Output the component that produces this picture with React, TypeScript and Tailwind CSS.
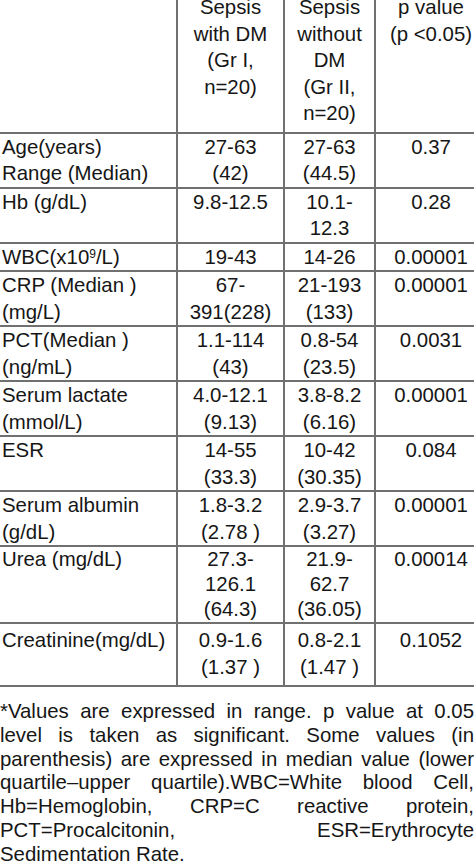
import React from "react";

type Row = { label: React.ReactNode; a: React.ReactNode; b: React.ReactNode; p: string; cls?: string };

const rows: Row[] = [
  { label: <>Age(years)<br />Range (Median)</>, a: <>27-63<br />(42)</>, b: <>27-63<br />(44.5)</>, p: "0.37" },
  { label: <>Hb (g/dL)</>, a: <>9.8-12.5</>, b: <>10.1-<br />12.3</>, p: "0.28" },
  { label: <>WBC(x10<sup className="text-[12px]">9</sup>/L)</>, a: <>19-43</>, b: <>14-26</>, p: "0.00001" },
  { label: <>CRP (Median )<br />(mg/L)</>, a: <>67-<br />391(228)</>, b: <>21-193<br />(133)</>, p: "0.00001" },
  { label: <>PCT(Median )<br />(ng/mL)</>, a: <>1.1-114<br />(43)</>, b: <>0.8-54<br />(23.5)</>, p: "0.0031" },
  { label: <>Serum lactate<br />(mmol/L)</>, a: <>4.0-12.1<br />(9.13)</>, b: <>3.8-8.2<br />(6.16)</>, p: "0.00001" },
  { label: <>ESR</>, a: <>14-55<br />(33.3)</>, b: <>10-42<br />(30.35)</>, p: "0.084" },
  { label: <>Serum albumin<br />(g/dL)</>, a: <>1.8-3.2<br />(2.78 )</>, b: <>2.9-3.7<br />(3.27)</>, p: "0.00001" },
  { label: <>Urea (mg/dL)</>, a: <>27.3-<br />126.1<br />(64.3)</>, b: <>21.9-<br />62.7<br />(36.05)</>, p: "0.00014", cls: "leading-[25px]" },
  { label: <>Creatinine(mg/dL)</>, a: <>0.9-1.6<br />(1.37 )</>, b: <>0.8-2.1<br />(1.47 )</>, p: "0.1052", cls: "pt-[3px] pb-[5px]" },
];

const lines = [
  "*Values are expressed in range. p value at 0.05",
  "level is taken as significant. Some values (in",
  "parenthesis) are expressed in median value (lower",
  "quartile\u2013upper quartile).WBC=White blood Cell,",
  "Hb=Hemoglobin, CRP=C reactive protein,",
  "PCT=Procalcitonin, ESR=Erythrocyte",
];

export default function App() {
  const bd = "border-[#707070]";
  return (
    <div className="w-[474px] h-[865px] overflow-hidden bg-white text-[#161616] font-['Liberation_Sans',Arial,sans-serif]">
      <div className="w-[474px] overflow-hidden -mt-[6px]">
        <table className="table-fixed border-collapse w-[486px] text-[20.4px] leading-[26.5px]">
          <colgroup>
            <col className="w-[177px]" />
            <col className="w-[107px]" />
            <col className="w-[91px]" />
            <col className="w-[111px]" />
          </colgroup>
          <tbody>
            <tr className={`border-b-2 ${bd}`}>
              <td className="p-0 pb-[5px] align-top" />
              <td className={`p-0 pb-[5px] align-top text-center border-l-2 ${bd}`}>
                Sepsis<br />with DM<br />(Gr I,<br />n=20)
              </td>
              <td className={`p-0 pb-[5px] align-top text-center border-l-2 ${bd}`}>
                Sepsis<br />without<br />DM<br />(Gr II,<br />n=20)
              </td>
              <td className={`p-0 pb-[5px] align-top text-center border-l-2 ${bd}`}>
                p value<br />(p &lt;0.05)
              </td>
            </tr>
            {rows.map((r, i) => (
              <tr key={i} className={`border-b-2 ${bd}`}>
                <td className={`p-0 pl-[2px] align-top text-left whitespace-nowrap ${r.cls ?? ""}`}>{r.label}</td>
                <td className={`p-0 align-top text-center border-l-2 ${bd} ${r.cls ?? ""}`}>{r.a}</td>
                <td className={`p-0 align-top text-center border-l-2 ${bd} ${r.cls ?? ""}`}>{r.b}</td>
                <td className={`p-0 align-top text-center border-l-2 ${bd} ${r.cls ?? ""}`}>{r.p}</td>
              </tr>
            ))}
          </tbody>
        </table>
      </div>
      <div className="mt-[13px] text-[20.4px] leading-[23.8px]">
        {lines.map((l, i) => (
          <div key={i} className="text-justify [text-align-last:justify]">
            {l}
          </div>
        ))}
        <div>Sedimentation Rate.</div>
      </div>
    </div>
  );
}
